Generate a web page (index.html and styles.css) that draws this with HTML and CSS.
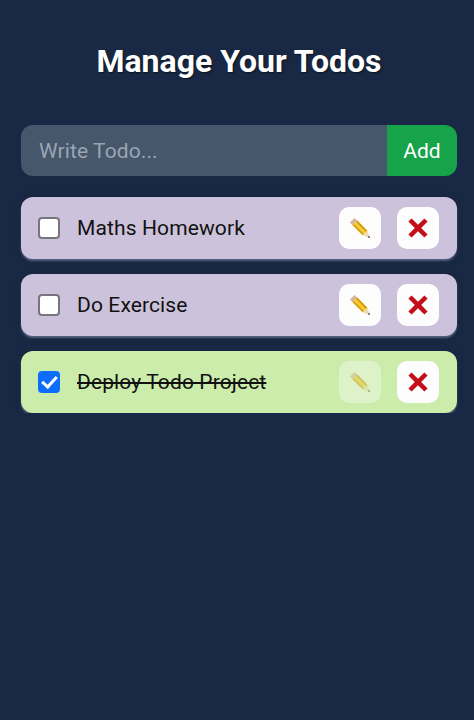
FILE: index.html
```html
<!DOCTYPE html>
<html lang="en">
<head>
    <meta charset="UTF-8">
    <meta name="viewport" content="width=device-width, initial-scale=1.0">
    <title>Manage Your Todos</title>
    <link rel="stylesheet" href="styles.css">
</head>
<body>
    <main class="app">
        <h1 class="title">Manage Your Todos</h1>

        <!-- Add form -->
        <form class="todo-form">
            <input class="todo-input" type="text" placeholder="Write Todo...">
            <button class="add-button" type="button">Add</button>
        </form>

        <!-- Todo list -->
        <ul class="todo-list">
            <li class="todo-item">
                <input class="todo-check" type="checkbox">
                <span class="todo-text">Maths Homework</span>
                <button class="icon-button" type="button" aria-label="Edit">
                    <svg viewBox="0 0 24 24" class="icon"><use href="#pencil"></use></svg>
                </button>
                <button class="icon-button" type="button" aria-label="Delete">
                    <svg viewBox="0 0 24 24" class="icon"><use href="#cross"></use></svg>
                </button>
            </li>
            <li class="todo-item">
                <input class="todo-check" type="checkbox">
                <span class="todo-text">Do Exercise</span>
                <button class="icon-button" type="button" aria-label="Edit">
                    <svg viewBox="0 0 24 24" class="icon"><use href="#pencil"></use></svg>
                </button>
                <button class="icon-button" type="button" aria-label="Delete">
                    <svg viewBox="0 0 24 24" class="icon"><use href="#cross"></use></svg>
                </button>
            </li>
            <li class="todo-item done">
                <input class="todo-check" type="checkbox" checked>
                <span class="todo-text">Deploy Todo Project</span>
                <button class="icon-button disabled" type="button" aria-label="Edit">
                    <svg viewBox="0 0 24 24" class="icon"><use href="#pencil"></use></svg>
                </button>
                <button class="icon-button" type="button" aria-label="Delete">
                    <svg viewBox="0 0 24 24" class="icon"><use href="#cross"></use></svg>
                </button>
            </li>
        </ul>
    </main>

    <!-- Shared icons -->
    <svg class="icon-defs" aria-hidden="true">
        <symbol id="pencil" viewBox="0 0 24 24">
            <path d="M6.5 1.9 L1.9 6.5 L4.6 9.2 L9.2 4.6 Z" fill="#d8b49c"/>
            <path d="M9.2 4.6 L4.6 9.2 L14.7 19.3 L19.3 14.7 Z" fill="#f5cb2e"/>
            <path d="M9.2 4.6 L8 5.8 L18.1 15.9 L19.3 14.7 Z" fill="#d3960f"/>
            <path d="M4.6 9.2 L5.8 8 L15.9 18.1 L14.7 19.3 Z" fill="#d89f16"/>
            <path d="M14.7 19.3 L19.3 14.7 L22 22 Z" fill="#ecd9b0"/>
            <path d="M19.8 21.2 L21.2 19.8 L22 22 Z" fill="#333"/>
        </symbol>
        <symbol id="cross" viewBox="0 0 24 24">
            <path d="M5.6 2.4 L12 8.8 L18.4 2.4 L21.6 5.6 L15.2 12 L21.6 18.4 L18.4 21.6 L12 15.2 L5.6 21.6 L2.4 18.4 L8.8 12 L2.4 5.6 Z" fill="#c40f1a"/>
        </symbol>
    </svg>
</body>
</html>
```

FILE: styles.css
```css
body {
    margin: 0;
    padding: 0;
    background: #192945;
    font-family: Roboto, Arial, sans-serif;
}

.app {
    padding: 44px 17px 0 21px;
}

.title {
    margin: 0 0 46px;
    color: #fff;
    font-size: 32px;
    line-height: 35px;
    font-weight: 700;
    text-align: center;
    text-shadow: 1px 1px 2px rgba(0, 0, 0, 0.6);
}

/* Add form */
.todo-form {
    display: flex;
    height: 51px;
    margin-bottom: 21px;
}

.todo-input {
    flex: 1;
    min-width: 0;
    padding: 0 18px;
    border: 0;
    border-radius: 12px 0 0 12px;
    background: #46566b;
    color: #fff;
    font-family: Roboto, sans-serif;
    font-size: 21px;
    letter-spacing: 0.1px;
    outline: none;
}

.todo-input::placeholder {
    color: #9aa5b3;
}

.add-button {
    width: 70px;
    border: 0;
    border-radius: 0 12px 12px 0;
    background: #16a34a;
    color: #fff;
    font-family: Roboto, sans-serif;
    font-size: 21px;
}

/* Todo list */
.todo-list {
    display: flex;
    flex-direction: column;
    gap: 15px;
    margin: 0;
    padding: 0;
    list-style: none;
}

.todo-item {
    display: flex;
    align-items: center;
    height: 62px;
    padding: 0 18px 0 17px;
    box-sizing: border-box;
    border-radius: 12px;
    background: #cdc2db;
    box-shadow: 0 2px 2px rgba(120, 140, 170, 0.6), 0 0 10px rgba(0, 0, 0, 0.15);
}

.todo-item.done {
    background: #cbecab;
}

.todo-check {
    appearance: none;
    position: relative;
    flex: none;
    width: 22px;
    height: 22px;
    margin: 0 17px 0 0;
    box-sizing: border-box;
    border: 2px solid #77757d;
    border-radius: 4px;
    background: #fff;
}

.todo-check:checked {
    border-color: #0d6efd;
    background: #0d6efd;
}

/* check mark sits over the box */
.todo-check:checked::after {
    content: "";
    position: absolute;
    left: 5px;
    top: 0;
    width: 6px;
    height: 12px;
    border: solid #fff;
    border-width: 0 3px 3px 0;
    transform: rotate(42deg);
}

.todo-text {
    flex: 1;
    color: #111;
    font-size: 21px;
    letter-spacing: 0.12px;
}

.done .todo-text {
    text-decoration: line-through;
}

.icon-button {
    display: flex;
    align-items: center;
    justify-content: center;
    flex: none;
    width: 42px;
    height: 42px;
    margin-left: 16px;
    padding: 0;
    border: 0;
    border-radius: 10px;
    background: #fdfdfd;
}

.icon-button.disabled {
    opacity: 0.5;
    background: rgba(255, 255, 255, 0.7);
}

.icon {
    width: 24px;
    height: 24px;
}

.icon-defs {
    display: none;
}
```
